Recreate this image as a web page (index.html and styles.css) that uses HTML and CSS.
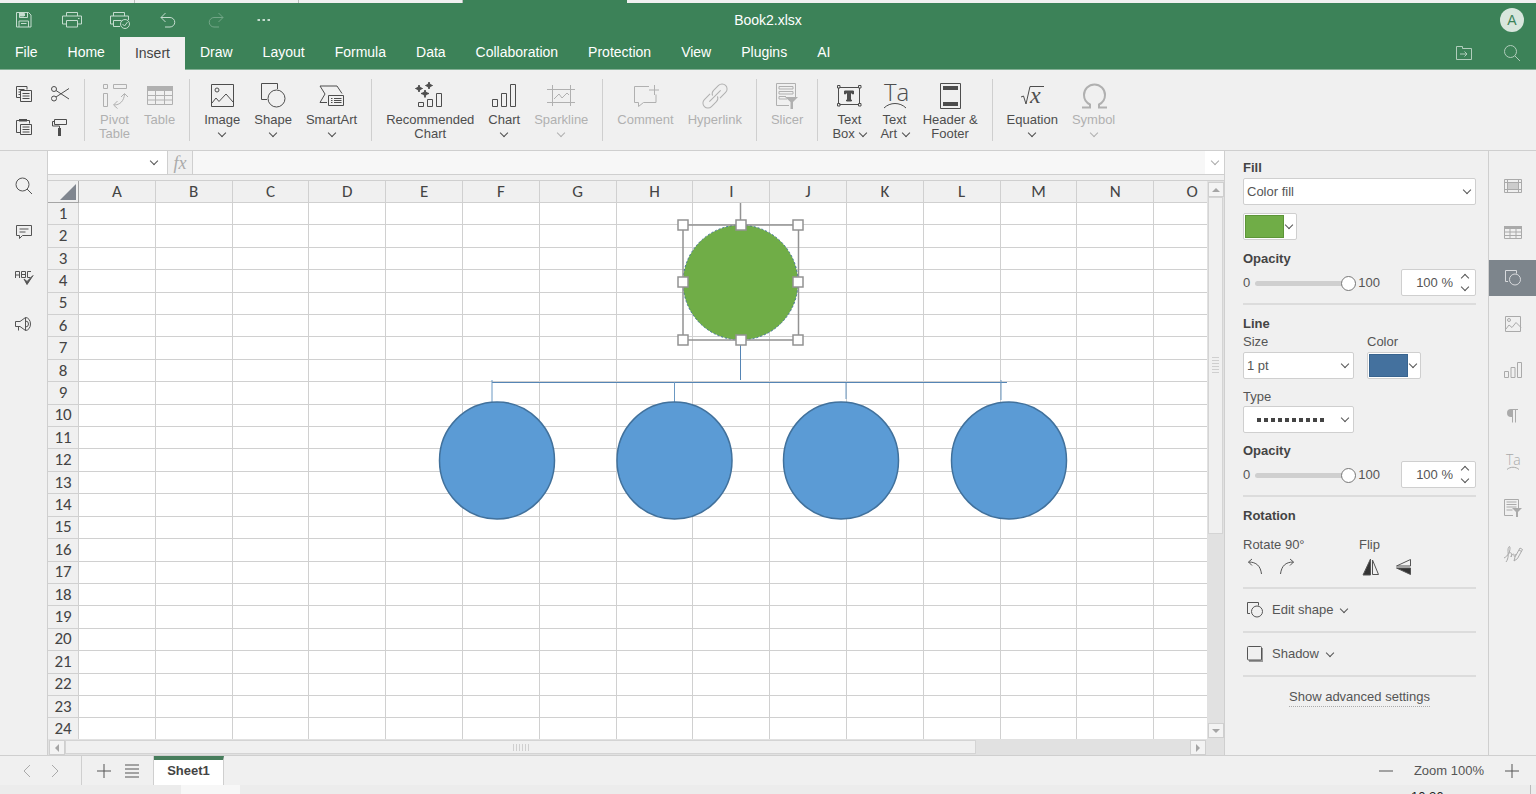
FILE: index.html
```html
<!DOCTYPE html>
<html lang="en">
<head>
    <meta charset="UTF-8">
    <meta name="viewport" content="width=device-width, initial-scale=1.0">
    <title>Book2.xlsx</title>
    <link rel="stylesheet" href="styles.css">
</head>
<body>
    <div class="window-tabs"><span></span><span></span><span></span><span class="current"></span></div>
    <header>
        <div class="title-bar">
            <div class="quick">
                <button aria-label="Save"><svg width="18" height="18" viewBox="0 0 18 18"><path d="M1.500 1.500h12l2.500 2.500v12h-14.500zM4.500 1.500v5h8v-5M9.500 2.500v2.500M4 16v-6h9.500v6M6 12.500h5.500"/><path d="M5 2h4v3h-4z" fill="currentColor"/></svg></button>
                <button aria-label="Print"><svg width="20" height="18" viewBox="0 0 20 18"><path d="M4.500 5v-3.500h11v3.500M4.500 13h-4v-8h19v8h-4M4.500 9.500h11v6.500h-11zM16 7.500h1.500"/></svg></button>
                <button aria-label="Quick print"><svg width="20" height="18" viewBox="0 0 20 18"><path d="M3.500 5v-3.500h11v3.500M3.500 13h-3v-8h18v4M10 15.500h-6.500v-6h8"/><circle cx="15" cy="13" r="4.500"/><path d="M12.500 13l2 2 3-4"/></svg></button>
                <button aria-label="Undo"><svg width="18" height="18" viewBox="0 0 18 18"><path d="M6.500 2l-4.500 4.500 4.500 4.500M2 6.500h9a4.500 4.500 0 0 1 0 9.500h-5"/></svg></button>
                <button aria-label="Redo" disabled><svg width="18" height="18" viewBox="0 0 18 18"><path d="M11.500 2l4.500 4.500-4.500 4.500M16 6.500h-9a4.500 4.500 0 0 0 0 9.500h5"/></svg></button>
                <button aria-label="More"><svg width="16" height="18" viewBox="0 0 16 18"><path d="M1.500 8h2.500v2h-2.500zM6.500 8h2.500v2h-2.500zM11.500 8h2.500v2h-2.500z" fill="currentColor" stroke="none"/></svg></button>
            </div>
            <div class="doc-name">Book2.xlsx</div>
            <div class="user"><button class="avatar">A</button></div>
        </div>
        <nav>
            <button>File</button>
            <button>Home</button>
            <button class="active">Insert</button>
            <button>Draw</button>
            <button>Layout</button>
            <button>Formula</button>
            <button>Data</button>
            <button>Collaboration</button>
            <button>Protection</button>
            <button>View</button>
            <button>Plugins</button>
            <button>AI</button>
            <div class="nav-tools">
                <button aria-label="Open file location"><svg width="18" height="16" viewBox="0 0 18 16"><path d="M1.500 1.500h6v2h9v11h-15zM5 9h7M9.500 6.500l2.500 2.500-2.500 2.500"/></svg></button>
                <button aria-label="Search"><svg width="18" height="18" viewBox="0 0 18 18"><circle cx="7.500" cy="7.500" r="6"/><path d="M12 12l5 5"/></svg></button>
            </div>
        </nav>
    </header>

    <div class="ribbon">
        <div class="group clipboard">
            <button aria-label="Copy"><svg width="18" height="18" viewBox="0 0 18 18"><path d="M5 12.500h-3.500v-11h10.500v3M3.500 4.500h6M3.500 7h1.500M3.500 9.500h1.500M5.500 5.500h11v11h-11zM7.500 8.500h7M7.500 11h7M7.500 13.500h7"/></svg></button>
            <button aria-label="Cut"><svg width="20" height="18" viewBox="0 0 20 18"><circle cx="4" cy="4" r="2.500"/><circle cx="4" cy="13.500" r="2.500"/><path d="M6 5.500l13 8.500M6 12l13-8.500"/></svg></button>
            <button aria-label="Paste"><svg width="18" height="18" viewBox="0 0 18 18"><path d="M5 14.500h-3.500v-12h13v3M5.500 6.500h11v10h-11zM7.500 9h7M7.500 11.500h7M7.500 14h7"/><path d="M4 1h8v2.500h-8z" fill="currentColor" stroke="none"/></svg></button>
            <button aria-label="Copy style"><svg width="18" height="18" viewBox="0 0 18 18"><path d="M3.500 1.500h12v5h-12zM3.500 3.500h-2v4.500h7v2"/><path d="M7 10h3v8h-3z" fill="currentColor" stroke="none"/></svg></button>
        </div>
        <div class="group">
            <button disabled><svg width="28" height="28" viewBox="0 0 28 28"><path d="M2.500 2.500h4v4h-4zM12.500 2.500h13v4h-13zM2.500 11.500h4v13h-4zM13 23c6 0 10-4 10.500-11M20 15l3.500-3.500 3.500 3.500M16.500 19l-4 4 4 3.500"/></svg><span>Pivot<br>Table</span></button>
            <button disabled><svg width="28" height="28" viewBox="0 0 28 28"><path d="M1.500 4.500h25v18h-25zM1.500 8.500h25M1.500 13.500h25M1.500 18h25M9.500 8v14.500M18.500 8v14.500"/><path d="M1 4h26v4.500h-26z" fill="currentColor" stroke="none"/></svg><span>Table</span></button>
        </div>
        <div class="group">
            <button><svg width="28" height="28" viewBox="0 0 28 28"><path d="M3.500 2.500h22v22h-22zM4 21l4-5 3 3.500 7-7.500 7 8"/><circle cx="9" cy="8" r="2"/></svg><span>Image</span><i class="caret"></i></button>
            <button><svg width="28" height="28" viewBox="0 0 28 28"><path d="M8 17.500h-5.500v-16h16v5.500"/><circle cx="17.500" cy="16.500" r="8.500"/></svg><span>Shape</span><i class="caret"></i></button>
            <button><svg width="28" height="28" viewBox="0 0 28 28"><path d="M9 20.500h-7l5-8.500-5-8h17l5 7.500M10.500 13.500h15v10h-15zM13 16.500h1.500M16 16.500h7.500M13 18.500h1.500M16 18.500h7.500M13 20.500h1.500M16 20.500h7.500"/></svg><span>SmartArt</span><i class="caret"></i></button>
        </div>
        <div class="group">
            <button><svg width="28" height="28" viewBox="0 0 28 28"><path d="M2.500 20.500h5v4h-5zM11.500 17.500h5v7h-5zM20.500 11.500h5v13h-5z"/><path d="M3 3l1 2.500 2.500 1-2.500 1-1 2.500-1-2.500-2.500-1 2.500-1zM13 0l1 2.500 2.500 1-2.500 1-1 2.500-1-2.500-2.500-1 2.500-1zM9 8l1 2.500 3 1-3 1-1 3-1-3-3-1 3-1z" fill="currentColor"/></svg><span>Recommended<br>Chart</span></button>
            <button><svg width="28" height="28" viewBox="0 0 28 28"><path d="M2.500 17.500h5v7h-5zM11.500 11.500h5v13h-5zM20.500 2.500h5v22h-5z"/></svg><span>Chart</span><i class="caret"></i></button>
            <button disabled><svg width="28" height="28" viewBox="0 0 28 28"><path d="M0 7.500h28M0 20.500h28M5.500 3v21M23.500 3v21M7 17l5-5 3 4 5-5 2 2"/></svg><span>Sparkline</span><i class="caret"></i></button>
        </div>
        <div class="group">
            <button disabled><svg width="28" height="28" viewBox="0 0 28 28"><path d="M17 4.500h-14.500v16h4v4l5-4h12.500v-8M17 8h10M22.500 3v10"/></svg><span>Comment</span></button>
            <button disabled><svg width="28" height="28" viewBox="0 0 28 28"><g transform="rotate(-45 14 14)"><path d="M12 9h-8a5 5 0 0 0 0 10h7a5 5 0 0 0 4.500-3M16 19h8a5 5 0 0 0 0-10h-7a5 5 0 0 0-4.500 3M6 14h16"/></g></svg><span>Hyperlink</span></button>
        </div>
        <div class="group">
            <button disabled><svg width="28" height="28" viewBox="0 0 28 28"><path d="M16 23.500h-12.500v-22h19v15M6 4.500h14v2.500h-14zM6 9.500h14v2.500h-14zM14 17h-8v-2.500h7"/><path d="M12 15h13l-5 5v7h-2.500v-7z" fill="currentColor" stroke="none"/></svg><span>Slicer</span></button>
        </div>
        <div class="group">
            <button><svg width="28" height="28" viewBox="0 0 28 28"><path d="M4.500 5.500h19M4.500 22.500h19M3.500 6v16M24.500 6v16M2.500 3.500h2.500v2.500h-2.500zM23.500 3.500h2.500v2.500h-2.500zM2.500 21.500h2.500v2.500h-2.500zM23.500 21.500h2.500v2.500h-2.500z"/><path d="M9.500 9h9v3h-1v-1h-2v7h1v1h-5v-1h1v-7h-2v1h-1z" fill="currentColor"/></svg><span>Text<br>Box <i class="caret"></i></span></button>
            <button><svg width="28" height="28" viewBox="0 0 28 28"><text class="glyph" x="3" y="19" font-size="24">Ta</text><path d="M3 26c6-6 16-6 22 0"/></svg><span>Text<br>Art <i class="caret"></i></span></button>
            <button><svg width="28" height="28" viewBox="0 0 28 28"><path d="M4.500 1.500h20v25h-20z"/><path d="M7 4h15v4h-15zM7 20h15v4h-15z" fill="currentColor" stroke="none"/></svg><span>Header &amp;<br>Footer</span></button>
        </div>
        <div class="group last">
            <button><svg width="28" height="28" viewBox="0 0 28 28"><path d="M3 15l2.500-1 2.500 8 4-17.500h14"/><text class="math" x="12" y="21" font-size="24">x</text></svg><span>Equation</span><i class="caret"></i></button>
            <button disabled><svg width="28" height="28" viewBox="0 0 28 28"><path d="M2 25.500h8v-3c-4-2-6-5-6-9.500a10.500 10.500 0 0 1 21 0c0 4.500-2 7.500-6 9.500v3h8" stroke-width="2"/></svg><span>Symbol</span><i class="caret"></i></button>
        </div>
    </div>

    <main>
        <aside class="left-bar">
            <button aria-label="Find"><svg width="18" height="18" viewBox="0 0 18 18"><circle cx="7.500" cy="7.500" r="6.500"/><path d="M12 12l5 5"/></svg></button>
            <button aria-label="Comments"><svg width="18" height="18" viewBox="0 0 18 18"><path d="M1.500 2.500h15v10h-9l-3 3v-3h-3zM4.500 6h9M4.500 9h6"/></svg></button>
            <button aria-label="Spell checking"><svg width="20" height="18" viewBox="0 0 20 18"><path d="M1.500 9v-6.500h4v6.500M1.500 6h4M7.500 2.500h4v6h-4zM7.500 5.500h4M17 2.500h-3.500v6h3"/><path d="M10 10l3 2.500 6-6-6 9z" fill="currentColor"/></svg></button>
            <button aria-label="Feedback"><svg width="20" height="18" viewBox="0 0 20 18"><path d="M1.500 6.500h4.500l5.500-4v13l-5.500-4h-4.500zM4.500 12v3.500M11.500 6a3 3 0 0 1 0 6M11.500 2.500a5 6.500 0 0 1 0 13"/></svg></button>
        </aside>

        <section class="editor">
            <div class="formula-bar">
                <div class="name-box"><input type="text" aria-label="Cell name"><i class="caret"></i></div>
                <button class="fx">fx</button>
                <input class="formula" type="text" aria-label="Formula">
                <button class="expand" aria-label="Expand formula bar"><i class="caret"></i></button>
            </div>
            <div class="sheet-area">
                <div class="sheet">
                    <table>
                        <thead><tr id="letters"><th class="corner"></th></tr></thead>
                        <tbody id="rows"></tbody>
                    </table>
                    <svg class="shapes">
                        <g class="connectors">
                            <path d="M661.500 137v40M413 179.500h515"/>
                            <path class="soft" d="M413 177v22M595.500 179v20M767 180v16M922 177v20"/>
                        </g>
                        <g class="nodes">
                            <ellipse cx="418" cy="257.500" rx="57.500" ry="58.500"/>
                            <ellipse cx="595.500" cy="257.500" rx="57.500" ry="58.500"/>
                            <ellipse cx="762" cy="257.500" rx="57.500" ry="58.500"/>
                            <ellipse cx="930" cy="257.500" rx="57.500" ry="58.500"/>
                        </g>
                        <circle class="root" cx="661.500" cy="79.500" r="57.500"/>
                        <path class="frame" d="M661.500 0v22M604 22h115.500v115h-115.500z"/>
                        <g class="handles">
                            <rect x="599" y="17" width="10" height="10"/>
                            <rect x="657" y="17" width="10" height="10"/>
                            <rect x="714" y="17" width="10" height="10"/>
                            <rect x="599" y="74" width="10" height="10"/>
                            <rect x="714" y="74" width="10" height="10"/>
                            <rect x="599" y="132" width="10" height="10"/>
                            <rect x="657" y="132" width="10" height="10"/>
                            <rect x="714" y="132" width="10" height="10"/>
                        </g>
                    </svg>
                </div>
                <div class="scroll vertical">
                    <button aria-label="Scroll up"><svg width="8" height="4"><path d="M0 4l4-4 4 4z"/></svg></button>
                    <div class="track"><div class="thumb"></div></div>
                    <button aria-label="Scroll down"><svg width="8" height="4"><path d="M0 0l4 4 4-4z"/></svg></button>
                </div>
                <div class="scroll horizontal">
                    <button aria-label="Scroll left"><svg width="4" height="8"><path d="M4 0l-4 4 4 4z"/></svg></button>
                    <div class="track"><div class="thumb"></div></div>
                    <button aria-label="Scroll right"><svg width="4" height="8"><path d="M0 0l4 4-4 4z"/></svg></button>
                </div>
            </div>
        </section>

        <aside class="settings">
            <section>
                <label class="heading" for="fill">Fill</label>
                <div class="select"><select id="fill"><option>Color fill</option></select><i class="caret"></i></div>
                <button class="color green" aria-label="Fill color"><span></span><i class="caret"></i></button>
                <label class="heading" for="fill-opacity">Opacity</label>
                <div class="opacity">
                    <span>0</span><input type="range" id="fill-opacity" value="100"><span>100</span>
                    <div class="spin"><input type="text" value="100 %" aria-label="Fill opacity"><button class="up" aria-label="Increase"><i class="caret"></i></button><button aria-label="Decrease"><i class="caret"></i></button></div>
                </div>
            </section>
            <section>
                <div class="heading">Line</div>
                <div class="pair">
                    <div>
                        <label for="line-size">Size</label>
                        <div class="select"><select id="line-size"><option>1 pt</option></select><i class="caret"></i></div>
                    </div>
                    <div>
                        <label for="line-color">Color</label>
                        <button class="color blue" id="line-color"><span></span><i class="caret"></i></button>
                    </div>
                </div>
                <label class="type-label" for="line-type">Type</label>
                <button class="line-type" id="line-type"><svg width="70" height="4"><path d="M0 2h70"/></svg><i class="caret"></i></button>
                <label class="heading" for="line-opacity">Opacity</label>
                <div class="opacity">
                    <span>0</span><input type="range" id="line-opacity" value="100"><span>100</span>
                    <div class="spin"><input type="text" value="100 %" aria-label="Line opacity"><button class="up" aria-label="Increase"><i class="caret"></i></button><button aria-label="Decrease"><i class="caret"></i></button></div>
                </div>
            </section>
            <section class="rotation">
                <div class="heading">Rotation</div>
                <div class="pair">
                    <div>
                        <div>Rotate 90°</div>
                        <div class="tools">
                            <button aria-label="Rotate left"><svg width="18" height="18" viewBox="0 0 18 18"><path d="M6 1l-3.500 3 3.500 3.500M2.500 4c8 0 12 4 13 12"/></svg></button>
                            <button aria-label="Rotate right"><svg width="18" height="18" viewBox="0 0 18 18"><path d="M12 1l3.500 3-3.500 3.500M15.500 4c-8 0-12 4-13 12"/></svg></button>
                        </div>
                    </div>
                    <div>
                        <div>Flip</div>
                        <div class="tools">
                            <button aria-label="Flip horizontally"><svg width="18" height="18" viewBox="0 0 18 18"><path d="M10.500 2v14.500h6z"/><path d="M8.500 1v16h-7.500z" fill="#333"/></svg></button>
                            <button aria-label="Flip vertically"><svg width="18" height="18" viewBox="0 0 18 18"><path d="M16.500 1.500v6.500h-14z"/><path d="M16.500 16.500v-6.500h-14z" fill="#333"/></svg></button>
                        </div>
                    </div>
                </div>
            </section>
            <section class="menu">
                <button><svg width="18" height="18" viewBox="0 0 18 18"><path d="M4 12.500h-2.500v-11h11v3"/><circle cx="11" cy="10.500" r="5.500"/></svg>Edit shape <i class="caret"></i></button>
            </section>
            <section class="menu">
                <button><svg width="18" height="18" viewBox="0 0 18 18"><path d="M3 16h13v-13" stroke="#999" stroke-width="2"/><rect x="1.500" y="1.500" width="14" height="13.500" rx="1"/></svg>Shadow <i class="caret"></i></button>
            </section>
            <a href="#" class="advanced">Show advanced settings</a>
        </aside>

        <aside class="right-bar">
            <button aria-label="Cell settings"><svg width="20" height="18" viewBox="0 0 20 18"><path d="M1.500 2.500h17v13h-17zM4.500 2.500v13M15.500 2.500v13M1.500 5.500h17M1.500 12.500h17"/><path d="M5 6h10v6h-10z" fill="#ccc" stroke="none"/></svg></button>
            <button aria-label="Table settings"><svg width="20" height="18" viewBox="0 0 20 18"><path d="M1.500 3.500h17v12h-17zM1.500 9h17M1.500 12.500h17M7 5v10.500M13 5v10.500"/><path d="M1 3h18v3h-18z" fill="currentColor" stroke="none"/></svg></button>
            <button class="active" aria-label="Shape settings"><svg width="18" height="18" viewBox="0 0 18 18"><path d="M4 12.500h-2.500v-11h11v3"/><circle cx="11" cy="10.500" r="5.500"/></svg></button>
            <button aria-label="Image settings"><svg width="18" height="18" viewBox="0 0 18 18"><path d="M1.500 1.500h15v15h-15zM2 14l3-4 3 2.500 4-5 5 5"/><circle cx="5" cy="5" r="1.500"/></svg></button>
            <button aria-label="Chart settings"><svg width="20" height="18" viewBox="0 0 20 18"><path d="M1.500 10.500h4v6h-4zM8 6.500h4v10h-4zM14.500 1.500h4v15h-4z"/></svg></button>
            <button aria-label="Paragraph settings"><svg width="18" height="18" viewBox="0 0 18 18"><path d="M8.500 2.500v13M11.500 2.500v13M8 2.500h6"/><path d="M9 2h-2a3.500 3.500 0 0 0 0 8h2z" fill="currentColor" stroke="none"/></svg></button>
            <button aria-label="Text Art settings"><svg width="18" height="18" viewBox="0 0 18 18"><text class="glyph" x="2" y="12" font-size="14">Ta</text><path d="M3 16.500c3-3 9-3 12 0"/></svg></button>
            <button aria-label="Slicer settings"><svg width="20" height="20" viewBox="0 0 20 20"><path d="M10 17.500h-8.500v-16h14v9M3.500 4h10M3.500 6.500h10M3.500 9h10M3.500 12h6"/><path d="M9 10h10l-4 4v5h-2v-5z" fill="currentColor" stroke="none"/></svg></button>
            <button aria-label="Signature settings"><svg width="20" height="18" viewBox="0 0 20 18"><path d="M1 13c4-2 6-6 6-10 0-3-2-1-2 2 0 4 1 8-2 12M6 8c3-1 3 1 2 4 1-3 3-4 3-2 0 3 1 1 2-1M11 16l1-4 5-9 2.500 1.500-5 9zM16 5l2.500 1.500"/></svg></button>
        </aside>
    </main>

    <footer>
        <div class="sheet-nav">
            <button aria-label="Previous sheet"><svg width="10" height="14" viewBox="0 0 10 14"><path d="M8 1l-6 6 6 6"/></svg></button>
            <button aria-label="Next sheet"><svg width="10" height="14" viewBox="0 0 10 14"><path d="M2 1l6 6-6 6"/></svg></button>
        </div>
        <div class="sheet-tools">
            <button aria-label="Add sheet"><svg width="14" height="14" viewBox="0 0 14 14"><path d="M7 0v14M0 7h14"/></svg></button>
            <button aria-label="List of sheets"><svg width="14" height="14" viewBox="0 0 14 14"><path d="M0 1h14M0 5h14M0 9h14M0 13h14"/></svg></button>
        </div>
        <button class="sheet-tab">Sheet1</button>
        <div class="zoom">
            <button aria-label="Zoom out"><svg width="14" height="14" viewBox="0 0 14 14"><path d="M0 7h14"/></svg></button>
            <button>Zoom 100%</button>
            <button aria-label="Zoom in"><svg width="14" height="14" viewBox="0 0 14 14"><path d="M7 0v14M0 7h14"/></svg></button>
        </div>
    </footer>
    <div class="taskbar"><span class="app"></span><span class="clock">10:26</span></div>

    <script>
        const letters = 'ABCDEFGHIJKLMNO'.split('');
        const letterRow = document.getElementById('letters');
        const body = document.getElementById('rows');

        letters.forEach(letter => {
            const th = document.createElement('th');
            th.textContent = letter;
            letterRow.appendChild(th);
        });

        for (let i = 1; i <= 24; i++) {
            const row = body.insertRow();
            const th = document.createElement('th');
            th.textContent = i;
            row.appendChild(th);
            letters.forEach(() => row.insertCell());
        }
    </script>
</body>
</html>
```

FILE: styles.css
```css
* {
    box-sizing: border-box;
}
body {
    margin: 0;
    height: 100vh;
    display: flex;
    flex-direction: column;
    overflow: hidden;
    font-family: "Liberation Sans", Arial, sans-serif;
    font-size: 13px;
    line-height: 16px;
    color: #555;
    background: #f0f0f0;
}
button, input, select {
    font: inherit;
    color: inherit;
    border: none;
    background: none;
    padding: 0;
    margin: 0;
    border-radius: 0;
}
button {
    display: flex;
    align-items: center;
    justify-content: center;
    cursor: pointer;
}
input {
    min-width: 0;
}
svg {
    fill: none;
    stroke: currentColor;
    overflow: visible;
    flex: none;
}
.glyph {
    font-family: "Open Sans", sans-serif;
    font-weight: 300;
    fill: currentColor;
    stroke: none;
}
.math {
    font-family: "Liberation Serif", serif;
    font-style: italic;
    fill: currentColor;
    stroke: none;
}
.caret {
    display: inline-block;
    width: 6px;
    height: 6px;
    border: solid currentColor;
    border-width: 0 1px 1px 0;
    transform: rotate(45deg);
    flex: none;
}

/* Header */
.window-tabs {
    display: flex;
    height: 3px;
}
.window-tabs span {
    width: 164px;
    border-right: 1px solid #bbb;
}
.window-tabs span:first-child {
    width: 135px;
}
.window-tabs .current {
    background: #3c8258;
    border: none;
}
header {
    background: #3c8258;
    color: #fff;
    font-size: 14px;
    border-bottom: 1px solid #84b095;
}
.title-bar {
    display: grid;
    grid-template-columns: 1fr auto 1fr;
    align-items: center;
    height: 34px;
}
.quick {
    display: flex;
    color: #c5dccf;
}
.quick button {
    width: 48px;
    height: 34px;
}
.quick button:disabled {
    opacity: 0.4;
}
.user {
    display: flex;
    justify-content: flex-end;
    padding-right: 12px;
}
.avatar {
    width: 24px;
    height: 24px;
    border-radius: 50%;
    background: #d8e6dd;
    color: #3c8258;
}
nav {
    display: flex;
    height: 32px;
}
nav button {
    padding: 0 15px 2px;
}
nav .active {
    background: #f0f0f0;
    color: #444;
    height: 33px;
}
.nav-tools {
    display: flex;
    margin-left: auto;
    color: #b1cdbc;
}
.nav-tools button {
    width: 48px;
    padding: 0;
}

/* Ribbon */
.ribbon {
    display: flex;
    padding: 9px 0;
    height: 81px;
    border-bottom: 1px solid #cfcfcf;
}
.group {
    display: flex;
    padding: 0 7px;
    border-right: 1px solid #cfcfcf;
    color: #4d4d4d;
}
.group.last {
    border: none;
}
.group button {
    flex-direction: column;
    justify-content: flex-start;
    padding: 3px 7px 0;
    line-height: 14px;
}
.group span {
    margin-top: 3px;
}
.group .caret {
    margin-top: 3px;
}
.group span .caret {
    margin: 0 0 2px 2px;
}
.group button:disabled {
    color: #b0b0b0;
}
.clipboard {
    display: grid;
    grid-template-columns: 36px 36px;
    grid-template-rows: 29px 37px;
    padding: 0 6px;
}
.clipboard button {
    padding: 0;
    justify-content: center;
}

/* Main area */
main {
    display: flex;
    flex: 1;
    min-height: 0;
}
.left-bar, .right-bar {
    display: flex;
    flex-direction: column;
    gap: 10px;
    width: 48px;
    padding-top: 17px;
    flex: none;
}
.left-bar button, .right-bar button {
    height: 36px;
}
.left-bar {
    border-right: 1px solid #cfcfcf;
}
.right-bar {
    border-left: 1px solid #cfcfcf;
    color: #aaa;
}
.right-bar .active {
    background: #7d858c;
    color: #d8dadd;
}
.editor {
    display: flex;
    flex-direction: column;
    flex: 1;
    min-width: 0;
    border-right: 1px solid #cfcfcf;
}
.formula-bar {
    display: flex;
    height: 24px;
    margin-bottom: 5px;
    border-bottom: 1px solid #cfcfcf;
}
.name-box {
    display: flex;
    align-items: center;
    width: 120px;
    padding-right: 10px;
    background: #fff;
    border-right: 1px solid #cfcfcf;
}
.name-box input {
    flex: 1;
}
.formula-bar .caret {
    margin-bottom: 3px;
}
.fx {
    width: 25px;
    border-right: 1px solid #cfcfcf;
    font-family: "Liberation Serif", serif;
    font-style: italic;
    font-size: 18px;
    color: #aaa;
}
.formula {
    flex: 1;
    background: #f7f7f7;
}
.expand {
    width: 19px;
    background: #fff;
    color: #aaa;
}
.sheet-area {
    display: grid;
    grid-template-columns: 1fr 17px;
    grid-template-rows: 1fr 16px;
    flex: 1;
    min-height: 0;
    border-top: 1px solid #cfcfcf;
}
.sheet {
    position: relative;
    overflow: hidden;
    background: #fff;
}
table {
    table-layout: fixed;
    width: 1183px;
    height: 560px;
    border-spacing: 0;
    font-family: Carlito, Lato, sans-serif;
    font-size: 17px;
    line-height: 18px;
    color: #444;
}
th, td {
    padding: 0;
    border: solid #d0d0d0;
    border-width: 0 1px 1px 0;
}
th {
    font-weight: normal;
    background: #f0f0f0;
}
thead tr {
    height: 22px;
}
.corner {
    width: 31px;
    padding: 3px 2px 2px 12px;
    border-color: #a5a5a5;
}
.corner::before {
    content: "";
    display: block;
    height: 16px;
    background: #80868f;
    clip-path: polygon(100% 0, 100% 100%, 0 100%);
}
/* drawing layer over the cells, starting at A1 */
.shapes {
    position: absolute;
    top: 22px;
    left: 31px;
    width: 100%;
    height: 100%;
}
.connectors {
    stroke: #5585b5;
}
.connectors .soft {
    stroke: #6b98c2;
}
.nodes {
    fill: #5b9bd5;
    stroke: #41719c;
    stroke-width: 1.5;
}
.root {
    fill: #70ad47;
    stroke: #41719c;
    stroke-dasharray: 2 2;
}
.frame, .handles {
    stroke: #939393;
    stroke-width: 1.5;
}
.handles {
    fill: #fff;
}
.scroll {
    display: flex;
    background: #e1e1e1;
    padding: 1px;
}
.scroll button {
    width: 16px;
    height: 15px;
    background: #f3f3f3;
    border: 1px solid #cfcfcf;
    flex: none;
}
.scroll svg {
    fill: #a5a5a5;
    stroke: none;
}
.scroll .track {
    flex: 1;
}
.thumb {
    display: flex;
    align-items: center;
    justify-content: center;
    height: 100%;
    background: #f0f0f0;
    border: 1px solid #d4d4d4;
}
.thumb::before {
    content: "";
    width: 16px;
    height: 7px;
    background: repeating-linear-gradient(90deg, #cfcfcf 0 1px, transparent 1px 3px);
}
.vertical {
    flex-direction: column;
}
.vertical .thumb {
    height: 64%;
}
.vertical .thumb::before {
    width: 7px;
    height: 16px;
    background: repeating-linear-gradient(#cfcfcf 0 1px, transparent 1px 3px);
}
.horizontal {
    grid-column: 1 / 3;
    padding-right: 18px;
}
.horizontal .thumb {
    width: 81%;
}

/* Shape settings */
.settings {
    width: 263px;
    padding: 9px 12px 0 18px;
    flex: none;
}
.settings section {
    border-bottom: 2px solid #dcdcdc;
    padding-bottom: 7px;
    margin-bottom: 11px;
}
.settings label {
    display: block;
}
.heading {
    font-weight: bold;
    color: #444;
}
.select, .color, .line-type, .spin {
    background: #fff;
    border: 1px solid #cfcfcf;
    border-radius: 2px;
    height: 27px;
}
.select {
    position: relative;
    margin-top: 2px;
}
.select select {
    appearance: none;
    width: 100%;
    height: 100%;
    padding: 0 3px;
}
.select .caret {
    position: absolute;
    right: 5px;
    top: 8px;
    pointer-events: none;
}
.color {
    width: 54px;
    padding: 1px;
    justify-content: space-between;
}
.color span {
    width: 39px;
    height: 100%;
    background: #70ad47;
    border: 1px solid #5d9538;
}
.color .caret {
    margin: 0 3px 4px 0;
}
.color.green {
    margin: 8px 0 11px;
}
.blue span {
    background: #44719e;
    border-color: #38648f;
}
.opacity {
    display: flex;
    align-items: center;
    margin-top: 2px;
}
.opacity input[type="range"] {
    appearance: none;
    width: 101px;
    height: 16px;
    margin: 2px 2px 0 5px;
}
.opacity input::-webkit-slider-runnable-track {
    height: 5px;
    border-radius: 3px;
    background: #cfcfcf;
}
.opacity input::-webkit-slider-thumb {
    appearance: none;
    width: 15px;
    height: 15px;
    margin-top: -5px;
    border: 1px solid #777;
    border-radius: 50%;
    background: #fff;
}
.spin {
    display: grid;
    grid-template-columns: 1fr 20px;
    width: 75px;
    margin-left: auto;
}
.spin input {
    grid-row: 1 / 3;
    text-align: right;
    padding-right: 2px;
}
.spin .caret {
    margin-bottom: 3px;
}
.spin .up .caret {
    margin: 3px 0 0;
    transform: rotate(225deg);
}
.pair {
    display: grid;
    grid-template-columns: 111px 1fr;
    column-gap: 13px;
    margin-top: 2px;
}
.pair .color {
    margin-top: 2px;
}
.type-label {
    margin-top: 10px;
}
.line-type {
    width: 111px;
    margin: 1px 0 10px;
    padding: 0 5px 0 13px;
    justify-content: space-between;
}
.line-type path {
    stroke: #444;
    stroke-width: 4;
    stroke-dasharray: 4 3;
}
.line-type .caret {
    margin-bottom: 3px;
}
.rotation .pair {
    margin-top: 13px;
    column-gap: 5px;
}
.tools {
    display: flex;
    gap: 14px;
    margin: 5px 0 4px 3px;
}
.tools button {
    width: 18px;
    height: 18px;
}
.settings .menu {
    padding: 1px 3px 12px;
}
.menu button {
    gap: 8px;
    height: 18px;
}
.menu .caret {
    margin-bottom: 3px;
}
.advanced {
    display: block;
    width: fit-content;
    margin: 0 auto;
    color: inherit;
    text-decoration: none;
    border-bottom: 1px dotted #aaa;
    line-height: 18px;
}

/* Footer */
footer {
    display: flex;
    height: 30px;
    border-top: 1px solid #cfcfcf;
}
.sheet-nav, .sheet-tools {
    display: flex;
    justify-content: center;
    gap: 18px;
    width: 82px;
    border-right: 1px solid #cfcfcf;
    color: #aaa;
}
.sheet-tools {
    gap: 14px;
    width: 72px;
    color: #555;
}
.sheet-tab {
    width: 70px;
    background: #fff;
    border-top: 4px solid #477d5c;
    border-right: 1px solid #cfcfcf;
    font-weight: bold;
    color: #444;
    padding-bottom: 4px;
}
.zoom {
    display: flex;
    gap: 21px;
    margin-left: auto;
    padding-right: 17px;
}
.taskbar {
    display: flex;
    justify-content: space-between;
    height: 9px;
    padding: 0 5px 0 181px;
    background: #ececec;
    overflow: hidden;
}
.app {
    width: 59px;
    background: #f7f7f7;
}
.clock {
    width: 120px;
    padding-top: 4px;
    border-right: 1px solid #bbb;
    color: #222;
}
```
